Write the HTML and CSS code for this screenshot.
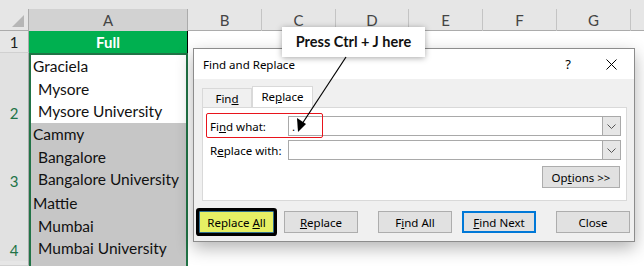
FILE: index.html
```html
<!DOCTYPE html>
<html lang="en">
<head>
  <meta charset="UTF-8" />
  <title>Find and Replace - line breaks</title>
  <link rel="stylesheet" href="styles.css">
</head>
<body>

<div class="sheet">
  <div class="strip"></div>

  <div class="row head">
    <div class="corner"><span class="tri"></span></div>
    <div class="col sel">A</div>
    <div class="col">B</div>
    <div class="col">C</div>
    <div class="col">D</div>
    <div class="col">E</div>
    <div class="col">F</div>
    <div class="col">G</div>
    <div class="col last"></div>
  </div>

  <div class="row r1">
    <div class="rh">1</div>
    <div class="cell full">Full</div>
    <div class="blank"></div>
  </div>

  <div class="row r2">
    <div class="rh sel">2</div>
    <div class="cell data active">
      <div>Graciela</div>
      <div class="ind">Mysore</div>
      <div class="ind">Mysore University</div>
    </div>
    <div class="blank"></div>
  </div>

  <div class="row r3">
    <div class="rh sel">3</div>
    <div class="cell data">
      <div>Cammy</div>
      <div class="ind">Bangalore</div>
      <div class="ind">Bangalore University</div>
    </div>
    <div class="blank"></div>
  </div>

  <div class="row r4">
    <div class="rh sel">4</div>
    <div class="cell data">
      <div>Mattie</div>
      <div class="ind">Mumbai</div>
      <div class="ind">Mumbai University</div>
    </div>
    <div class="blank"></div>
  </div>

  <div class="row r5">
    <div class="rh"></div>
    <div class="cell data"></div>
    <div class="blank"></div>
  </div>
</div>

<div class="dialog">
  <div class="titlebar">
    <span class="title">Find and Replace</span>
    <span class="help">?</span>
    <svg class="close-x" width="11" height="11" viewBox="0 0 11 11">
      <path d="M0.5 0.5 L10.5 10.5 M10.5 0.5 L0.5 10.5" stroke="#000" stroke-width="1" fill="none"/>
    </svg>
  </div>

  <div class="tabs">
    <div class="tab">Fin<u>d</u></div>
    <div class="tab active">Re<u>p</u>lace</div>
  </div>

  <div class="panel">
    <div class="field">
      <label>Fi<u>n</u>d what:</label>
      <div class="combo"><span class="val">.</span><span class="drop"><svg width="9" height="5" viewBox="0 0 9 5"><path d="M0.5 0.5 L4.5 4.5 L8.5 0.5" stroke="#555" fill="none"/></svg></span></div>
    </div>
    <div class="field">
      <label>R<u>e</u>place with:</label>
      <div class="combo"><span class="val"></span><span class="drop"><svg width="9" height="5" viewBox="0 0 9 5"><path d="M0.5 0.5 L4.5 4.5 L8.5 0.5" stroke="#555" fill="none"/></svg></span></div>
    </div>
    <div class="opt-row">
      <button class="btn opt">Op<u>t</u>ions &gt;&gt;</button>
    </div>
    <div class="redbox"></div>
  </div>

  <div class="actions">
    <button class="btn all">Replace <u>A</u>ll</button>
    <button class="btn"><u>R</u>eplace</button>
    <button class="btn wide-gap">F<u>i</u>nd All</button>
    <button class="btn next"><u>F</u>ind Next</button>
    <button class="btn wide-gap">Close</button>
  </div>
</div>

<div class="callout">Press Ctrl + J here</div>

<svg class="arrow" width="644" height="266" viewBox="0 0 644 266">
  <line x1="346" y1="57" x2="302" y2="124" stroke="#000" stroke-width="1.2"/>
  <polygon points="298,132 297,118 306,124" fill="#000"/>
</svg>

</body>
</html>
```

FILE: styles.css
```css
body {
  margin: 0;
  width: 644px;
  height: 266px;
  overflow: hidden;
  background: #fff;
  font-family: 'Lato', sans-serif;
  position: relative;
}

/* spreadsheet */
.strip {
  height: 9px;
  background: #e6e6e6;
}
.row {
  display: grid;
  grid-template-columns: 29px 159px 1fr;
}
.row.head {
  grid-template-columns: 29px 159px 74px 74px 73px 74px 74px 74px 1fr;
  height: 22px;
  background: #e6e6e6;
  border-bottom: 1px solid #ababab;
  box-sizing: border-box;
}
.corner {
  position: relative;
  border-right: 1px solid #ababab;
}
.corner .tri {
  position: absolute;
  right: 4px;
  bottom: 4px;
  width: 0;
  height: 0;
  border-left: 12px solid transparent;
  border-bottom: 12px solid #b6b6b6;
}
.col {
  border-right: 1px solid #c4c4c4;
  text-align: center;
  font-size: 15px;
  line-height: 22px;
  color: #444;
}
.col.sel {
  background: #d2d2d2;
  border-right-color: #ababab;
}
.col.last {
  border-right: none;
}

.rh {
  background: #e6e6e6;
  border-right: 1px solid #ababab;
  border-bottom: 1px solid #d0d0d0;
  font-size: 15px;
  color: #222;
  text-align: center;
  display: flex;
  align-items: flex-end;
  justify-content: center;
  padding-bottom: 2px;
  box-sizing: border-box;
}
.rh.sel {
  background: #e1e1e1;
  color: #217346;
}

.r1 { height: 22px; }
.r1 .rh { align-items: center; padding-bottom: 0; }
.r2 { height: 70px; }
.r3 { height: 69px; }
.r4 { height: 69px; }
.r5 { height: 5px; }

.cell.full {
  background: #00b050;
  color: #fff;
  font-weight: 700;
  font-size: 15px;
  text-align: center;
  line-height: 22px;
  border-right: 1px solid #000;
}
.cell.data {
  background: #c6c6c6;
  border-left: 2px solid #217346;
  border-right: 2px solid #217346;
  border-bottom: 1px solid #000;
  font-size: 15.5px;
  line-height: 22.5px;
  color: #111;
  padding: 0 0 1px 2px;
  display: flex;
  flex-direction: column;
  justify-content: flex-end;
  box-sizing: border-box;
}
.cell.data.active {
  background: #fff;
  border-top: 2px solid #217346;
}
.cell.data .ind {
  padding-left: 5px;
}
.r5 .cell.data {
  border-bottom: none;
}

/* dialog */
.dialog {
  position: absolute;
  left: 193px;
  top: 48px;
  width: 442px;
  height: 194px;
  box-sizing: border-box;
  border: 1px solid #8c8c8c;
  background: #f0f0f0;
  box-shadow: 0 6px 16px rgba(0, 0, 0, 0.3);
  font-family: 'Noto Sans', sans-serif;
  font-size: 11.5px;
  color: #000;
}
.titlebar {
  height: 30px;
  background: #fff;
  display: flex;
  align-items: center;
  padding-left: 9px;
}
.title {
  flex-grow: 1;
}
.help {
  font-size: 13px;
  margin-right: 35px;
}
.close-x {
  margin-right: 17px;
}

.tabs {
  display: flex;
  align-items: flex-end;
  height: 21px;
  margin: 7px 0 0 8px;
}
.tab {
  width: 50px;
  height: 19px;
  box-sizing: border-box;
  border: 1px solid #d9d9d9;
  border-bottom: none;
  text-align: center;
  line-height: 19px;
}
.tab.active {
  width: 61px;
  height: 22px;
  background: #fff;
  line-height: 20px;
  margin-bottom: -1px;
  position: relative;
}

.panel {
  position: relative;
  margin: 0 7px 0 8px;
  height: 94px;
  box-sizing: border-box;
  border: 1px solid #d9d9d9;
  background: #fff;
  padding: 8px 0 0 7px;
}
.field {
  display: flex;
  align-items: center;
  height: 20px;
  margin-bottom: 4px;
}
.field label {
  width: 78px;
}
.combo {
  width: 333px;
  height: 20px;
  box-sizing: border-box;
  border: 1px solid #a9a9a9;
  display: flex;
}
.combo .val {
  flex-grow: 1;
  padding-left: 3px;
  line-height: 20px;
}
.combo .drop {
  width: 17px;
  background: #e6e6e6;
  border-left: 1px solid #a9a9a9;
  display: flex;
  align-items: center;
  justify-content: center;
}
.opt-row {
  display: flex;
  justify-content: flex-end;
  margin: 6px 6px 0 0;
}
.redbox {
  position: absolute;
  left: 3px;
  top: 5px;
  width: 117px;
  height: 25px;
  box-sizing: border-box;
  border: 1.5px solid #e8141c;
  border-radius: 2px;
}

.btn {
  font-family: 'Noto Sans', sans-serif;
  font-size: 11.5px;
  color: #000;
  background: #e1e1e1;
  border: 1px solid #adadad;
  height: 22px;
  width: 74px;
  padding: 0;
  margin: 0;
}
.btn.opt {
  width: 78px;
}
.actions {
  display: flex;
  gap: 10px;
  margin: 10px 0 0 5px;
}
.btn.all {
  width: 75px;
  background: #e6f064;
  border: 1px solid #2f6f8f;
  box-shadow: 0 0 0 3px #000;
  border-radius: 1px;
}
.btn.wide-gap {
  margin-left: 10px;
}
.btn.next {
  border: 2px solid #0078d7;
}

/* annotation */
.callout {
  position: absolute;
  left: 282px;
  top: 27px;
  width: 143px;
  height: 30px;
  background: #fff;
  box-shadow: 0 1px 6px rgba(0, 0, 0, 0.35);
  font-weight: 700;
  font-size: 14.5px;
  line-height: 30px;
  text-align: center;
  color: #111;
}
.arrow {
  position: absolute;
  left: 0;
  top: 0;
  pointer-events: none;
}
```
